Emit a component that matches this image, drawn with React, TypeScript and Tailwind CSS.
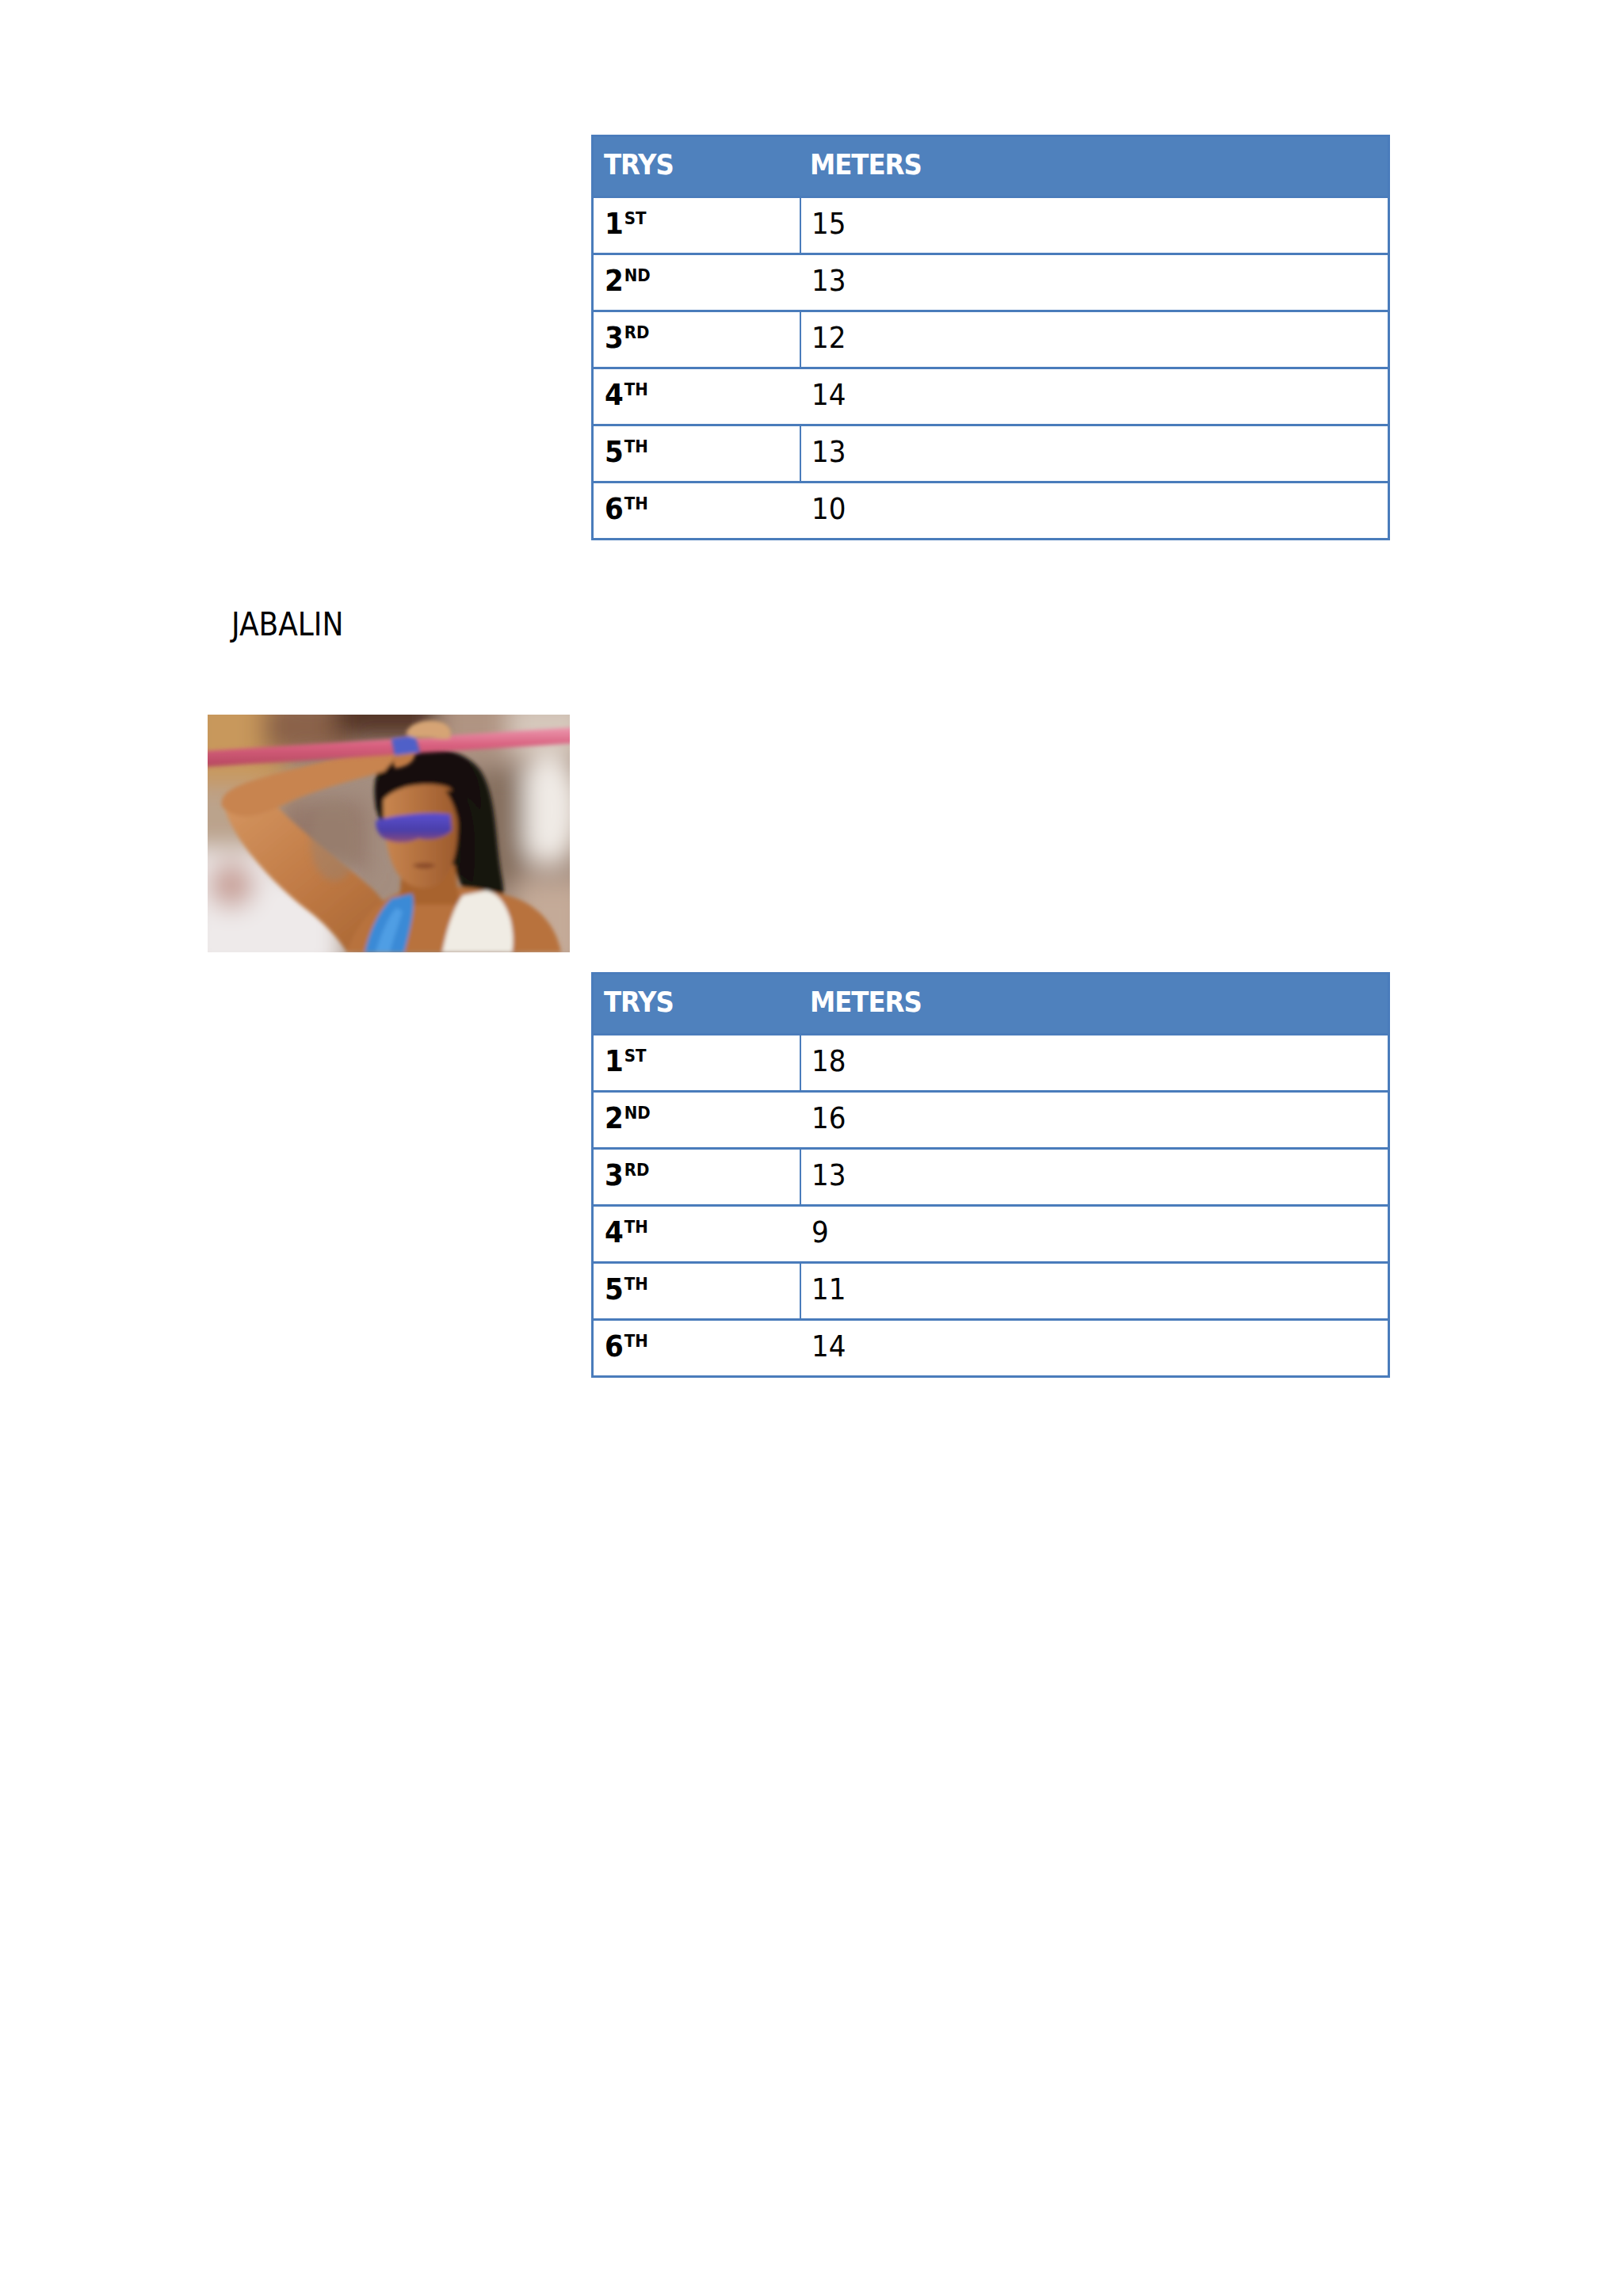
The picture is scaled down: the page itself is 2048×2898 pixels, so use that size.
import React from "react";

type Row = [string, string, string];

const rows1: Row[] = [
  ["1", "ST", "15"],
  ["2", "ND", "13"],
  ["3", "RD", "12"],
  ["4", "TH", "14"],
  ["5", "TH", "13"],
  ["6", "TH", "10"],
];

const rows2: Row[] = [
  ["1", "ST", "18"],
  ["2", "ND", "16"],
  ["3", "RD", "13"],
  ["4", "TH", "9"],
  ["5", "TH", "11"],
  ["6", "TH", "14"],
];

const font = { fontFamily: '"Liberation Sans Narrow", "DejaVu Sans Condensed", "Liberation Sans", sans-serif' };

function ScoreTable({ rows }: { rows: Row[] }) {
  return (
    <div className="w-[1008px] border-[3px] border-[#4a7cbb] bg-white" style={font}>
      <div className="flex h-[74px] bg-[#4f81bd] text-[36px] font-bold leading-[44px] tracking-[-1px] text-white">
        <div className="w-[262px] pl-[13px] pt-[13px]">TRYS</div>
        <div className="flex-1 pl-[11px] pt-[13px]">METERS</div>
      </div>
      {rows.map(([n, s, v], i) => (
        <div
          key={i}
          className="flex h-[72px] border-t-[3px] border-[#4a7cbb] text-[38px] leading-[44px] text-black"
        >
          <div
            className={
              i % 2 === 0
                ? "w-[262px] border-r-2 border-[#4a7cbb] pl-[14px] pt-[10px] font-bold"
                : "w-[262px] pl-[14px] pt-[10px] font-bold"
            }
          >
            {n}
            <span className="ml-[1px] align-[12px] text-[22px] leading-[22px]">{s}</span>
          </div>
          <div className="flex-1 pl-[13px] pt-[10px]">{v}</div>
        </div>
      ))}
    </div>
  );
}

function Athlete() {
  return (
    <svg width="457" height="300" viewBox="0 0 457 300" className="block">
      <defs>
        <filter id="bgblur" x="-30%" y="-30%" width="160%" height="160%">
          <feGaussianBlur stdDeviation="15" />
        </filter>
        <filter id="soft" x="-10%" y="-10%" width="120%" height="120%">
          <feGaussianBlur stdDeviation="2.6" />
        </filter>
        <filter id="softer" x="-20%" y="-20%" width="140%" height="140%">
          <feGaussianBlur stdDeviation="5" />
        </filter>
        <linearGradient id="jav" x1="0" y1="0" x2="0" y2="1">
          <stop offset="0" stopColor="#ec98ae" />
          <stop offset="0.45" stopColor="#d9607f" />
          <stop offset="1" stopColor="#b5475f" />
        </linearGradient>
        <linearGradient id="skin" x1="0" y1="0" x2="1" y2="1">
          <stop offset="0" stopColor="#d49560" />
          <stop offset="0.5" stopColor="#c07a45" />
          <stop offset="1" stopColor="#a4622f" />
        </linearGradient>
        <linearGradient id="face" x1="0" y1="0" x2="1" y2="0">
          <stop offset="0" stopColor="#c98650" />
          <stop offset="1" stopColor="#9c5a2c" />
        </linearGradient>
        <linearGradient id="glass" x1="0" y1="0" x2="0" y2="1">
          <stop offset="0" stopColor="#5a4fd0" />
          <stop offset="0.6" stopColor="#4a3ea8" />
          <stop offset="1" stopColor="#8a4a78" />
        </linearGradient>
        <clipPath id="clip">
          <rect width="457" height="300" />
        </clipPath>
      </defs>
      <g clipPath="url(#clip)">
        <rect width="457" height="300" fill="#a48e80" />
        <g filter="url(#bgblur)">
          <rect x="-30" y="-30" width="130" height="130" fill="#c8985c" />
          <rect x="70" y="-20" width="110" height="70" fill="#8a6248" />
          <rect x="160" y="-30" width="140" height="60" fill="#553528" />
          <rect x="290" y="-20" width="90" height="70" fill="#b09482" />
          <rect x="380" y="-20" width="100" height="70" fill="#d6c8bc" />
          <ellipse cx="430" cy="120" rx="40" ry="70" fill="#f0ebe6" />
          <rect x="330" y="70" width="70" height="150" fill="#86705f" />
          <rect x="-30" y="90" width="110" height="80" fill="#bba38c" />
          <rect x="-30" y="170" width="200" height="160" fill="#eeeaea" />
          <ellipse cx="30" cy="215" rx="30" ry="30" fill="#caa49c" />
          <rect x="90" y="110" width="110" height="90" fill="#94786a" />
          <rect x="390" y="210" width="90" height="110" fill="#c4aa98" />
        </g>
        <g filter="url(#soft)">
          {/* hair mass and ponytail */}
          <path
            d="M 218 62 C 236 34, 316 32, 344 70 C 366 104, 362 160, 372 210 C 378 244, 362 268, 344 254 C 326 238, 318 206, 306 184 L 226 152 C 208 120, 206 88, 218 62 Z"
            fill="#171210"
          />
          {/* upper arm */}
          <path
            d="M 20 112 C 30 160, 90 220, 130 250 C 155 270, 170 290, 176 300 L 250 300 C 245 270, 228 240, 208 220 C 170 185, 120 150, 90 118 Z"
            fill="url(#skin)"
          />
          {/* forearm */}
          <path
            d="M 18 116 C 15 100, 30 92, 60 82 C 120 64, 180 52, 236 36 L 258 62 C 210 76, 140 92, 95 114 C 70 126, 40 138, 18 116 Z"
            fill="#c88450"
          />
          {/* torso / shoulders */}
          <path
            d="M 175 300 C 190 260, 215 232, 250 222 C 300 212, 350 218, 390 232 C 420 244, 440 268, 446 300 Z"
            fill="#b8723e"
          />
          {/* neck */}
          <path d="M 245 190 L 312 190 L 318 240 L 242 240 Z" fill="#a8642f" />
          {/* face */}
          <path
            d="M 222 100 C 222 80, 300 76, 312 100 C 320 140, 316 190, 296 210 C 282 222, 258 222, 244 206 C 226 186, 220 140, 222 100 Z"
            fill="url(#face)"
          />
          {/* hair over forehead */}
          <path
            d="M 212 120 C 210 70, 240 44, 280 42 C 322 42, 348 70, 344 122 C 330 96, 300 86, 270 88 C 240 90, 222 102, 212 120 Z"
            fill="#120e0c"
          />
          <path d="M 300 96 C 318 120, 322 160, 318 200 L 334 212 C 340 170, 338 120, 320 96 Z" fill="#130f0d" />
          {/* lips shading */}
          <path d="M 258 190 C 266 186, 280 186, 288 190 C 280 196, 266 196, 258 190 Z" fill="#7c3e24" opacity="0.7" />
          {/* sunglasses */}
          <path
            d="M 212 134 C 240 126, 280 122, 306 126 L 308 146 C 298 156, 282 160, 266 156 C 256 162, 236 164, 222 156 C 214 150, 212 142, 212 134 Z"
            fill="url(#glass)"
          />
          {/* blue top strap */}
          <path d="M 198 300 C 204 275, 214 250, 232 232 L 258 226 C 262 240, 258 262, 248 300 Z" fill="#3a8ad6" />
          <path d="M 212 300 C 218 280, 226 258, 238 244 L 246 248 C 240 268, 234 284, 230 300 Z" fill="#5aa6ea" opacity="0.7" />
          {/* white top */}
          <path d="M 296 300 C 302 270, 310 244, 322 228 L 352 222 C 368 226, 376 240, 382 258 C 386 276, 386 290, 384 300 Z" fill="#f0ece4" />
        </g>
        {/* javelin */}
        <g filter="url(#soft)">
          <path d="M -5 46 L 462 16 L 462 36 L -5 66 Z" fill="url(#jav)" />
        </g>
        {/* hand on javelin */}
        <g filter="url(#soft)">
          <path d="M 232 30 L 262 26 L 268 48 L 236 52 Z" fill="#5060c8" />
          <path
            d="M 250 24 C 254 12, 270 6, 288 8 C 302 10, 310 18, 306 30 C 298 32, 290 30, 280 29 C 268 29, 258 31, 250 24 Z"
            fill="#d6a474"
          />
          <path d="M 232 52 L 262 48 C 262 58, 254 66, 236 68 Z" fill="#c07a45" />
        </g>
        <g filter="url(#softer)" opacity="0.5">
          <ellipse cx="160" cy="160" rx="30" ry="50" fill="#9a8270" />
        </g>
      </g>
    </svg>
  );
}

export default function App() {
  return (
    <div className="min-h-[2898px] w-[2048px] bg-white">
      <div className="pt-[170px]">
        <div className="ml-[746px]">
          <ScoreTable rows={rows1} />
        </div>
        <div
          className="ml-[292px] mt-[82px] text-[40px] leading-[48px] text-black"
          style={font}
        >
          JABALIN
        </div>
        <div className="ml-[262px] mt-[90px] h-[300px] w-[457px]">
          <Athlete />
        </div>
        <div className="ml-[746px] mt-[25px]">
          <ScoreTable rows={rows2} />
        </div>
      </div>
    </div>
  );
}
